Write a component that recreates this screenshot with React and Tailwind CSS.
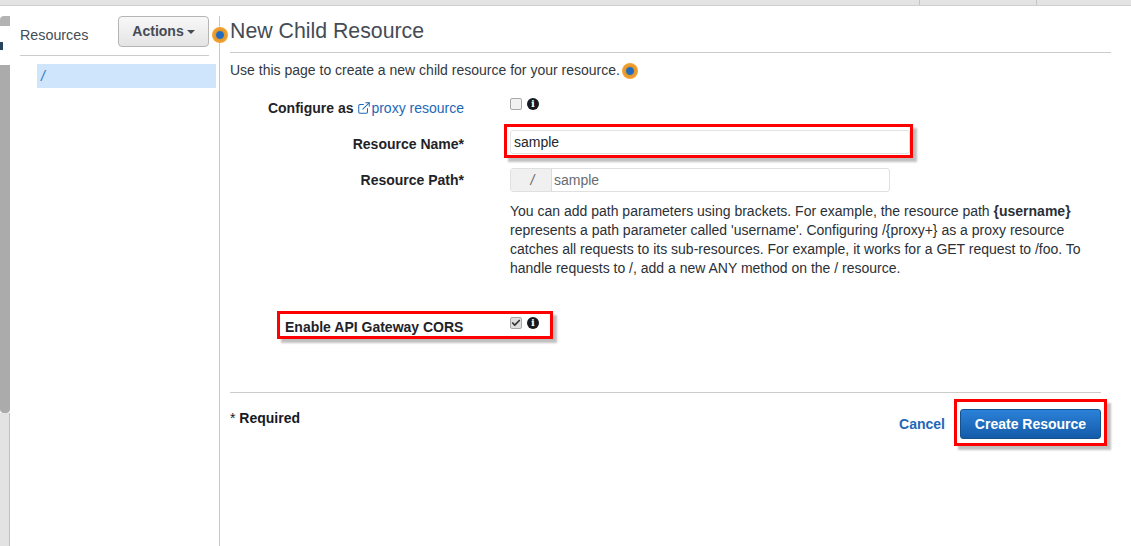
import { ExternalLink, Check } from 'lucide-react'

function HelpDot({ className = '' }) {
  return (
    <span className={`block h-[16px] w-[16px] rounded-full bg-[radial-gradient(circle,#1f6bc2_0%,#1f6bc2_30%,#e0972e_40%,#f5a331_68%,#fcc77a_100%)] ${className}`} />
  )
}

function InfoDot() {
  return (
    <span className="flex h-[12px] w-[12px] items-center justify-center rounded-full bg-[#16191f] text-[10px] font-bold leading-none text-white font-['DejaVu_Serif',serif]">
      i
    </span>
  )
}

function Row({ label, className = '', labelClass = '', children }) {
  return (
    <div className={`flex items-center ${className}`}>
      <div className={`w-[234px] text-right text-[14px] font-bold text-[#1f2328] ${labelClass}`}>{label}</div>
      <div className="ml-[46px] flex-1">{children}</div>
    </div>
  )
}

export default function App() {
  return (
    <div className="flex h-[546px] w-[1131px] flex-col overflow-hidden bg-white font-['Liberation_Sans',sans-serif] text-[14px] text-[#16191f]">
      {/* top strip */}
      <div className="flex h-[6px] shrink-0 justify-end border-b border-[#d0d0d0] bg-[#e3e3e3]">
        <div className="w-[117px] border-l border-[#c4c4c4]" />
        <div className="w-[95px] border-l border-[#c4c4c4]" />
      </div>

      <div className="flex flex-1 pt-[10px]">
        {/* collapsed nav rail */}
        <div className="flex w-[10px] shrink-0 flex-col">
          <div className="h-[10px] w-[10px] rounded-tl-[4px] bg-[#b3b3b3]" />
          <div className="mt-[16px] h-[8px] w-[3px] bg-[#27455f]" />
          <div className="mt-[15px] h-[348px] w-[10px] rounded-b-[4px] bg-[#ababab]" />
          <div className="flex-1 border-r border-[#c0c0c0] bg-[#e3e3e3]" />
        </div>

        {/* resources tree */}
        <div className="w-[210px] shrink-0 border-r border-[#c8c8c8] pl-[10px]">
          <div className="flex h-[40px] w-[189px] items-start justify-between border-b border-[#cccccc]">
            <span className="mt-[9px] text-[14.3px] text-[#444c55]">Resources</span>
            <button className="flex h-[31px] w-[91px] items-center justify-center rounded-[4px] border border-[#b5b5b5] bg-gradient-to-b from-[#f8f8f8] to-[#e4e4e4] text-[14px] font-bold text-[#444b55]">
              Actions
              <span className="ml-[3px] mt-[1px] h-0 w-0 border-x-[4px] border-t-[4px] border-x-transparent border-t-[#444b55]" />
            </button>
          </div>
          <div className="ml-[17px] mt-[8px] flex h-[24px] w-[179px] items-center bg-[#cee5fc] pl-[4px] italic text-[#2f74c0]">
            /
          </div>
        </div>

        {/* main panel */}
        <div className="relative w-[891px] shrink-0 pl-[10px]">
          <HelpDot className="absolute left-[-8px] top-[11px]" />
          <h1 className="flex h-[37px] items-start border-b border-[#cccccc] text-[21.3px] leading-[30px] text-[#444c55]">
            New Child Resource
          </h1>
          <div className="mt-[7px] flex items-center gap-[2px] text-[#33383e]">
            Use this page to create a new child resource for your resource.
            <HelpDot />
          </div>

          <div className="mt-[13px] w-[880px]">
            <Row
              className="h-[28px]"
              label={
                <span>
                  Configure as{' '}
                  <span className="font-normal text-[#1d68b8]">
                    <ExternalLink className="mb-[2px] inline h-[14px] w-[14px]" strokeWidth={1.75} />
                    proxy resource
                  </span>
                </span>
              }
            >
              <div className="mb-[8px] flex items-center gap-[5px]">
                <span className="h-[12px] w-[12px] rounded-[2px] border border-[#a8a8a8] bg-[#f1f1f1]" />
                <InfoDot />
              </div>
            </Row>

            <Row className="mt-[2px] h-[34px]" labelClass="pt-[6px]" label="Resource Name*">
              <div className="ml-[-6px] h-[34px] w-[409px] border-[3px] border-[#ff0000] pl-[3px] pt-[3px] pb-[1px] shadow-[4px_4px_2px_rgba(0,0,0,0.25)]">
                <div className="flex h-full items-center rounded-[3px] border border-[#e3e3e3] pl-[3px] pt-[1px] text-[#23272c]">
                  sample
                </div>
              </div>
            </Row>

            <Row className="mt-[10px] h-[24px]" label="Resource Path*">
              <div className="flex h-[24px] w-[380px] rounded-[3px] border border-[#e0e0e0]">
                <div className="flex w-[41px] items-center justify-center rounded-l-[3px] border-r border-[#dcdcdc] bg-[#f0f0f0] pl-[3px] italic text-[#666666]">
                  /
                </div>
                <div className="flex items-center pl-[2px] text-[#666c72]">sample</div>
              </div>
            </Row>

            <p className="ml-[280px] mt-[10px] w-[590px] leading-[19px] text-[#2b3036]">
              You can add path parameters using brackets. For example, the resource path <b>{'{username}'}</b> represents a path parameter called 'username'. Configuring /{'{proxy+}'} as a proxy resource catches all requests to its sub-resources. For example, it works for a GET request to /foo. To handle requests to /, add a new ANY method on the / resource.
            </p>

            {/* cors toggle, flagged in red */}
            <div className="ml-[47px] mt-[33px] flex h-[28px] w-[276px] items-center border-[3px] border-[#ff0000] pl-[5px] shadow-[4px_4px_2px_rgba(0,0,0,0.25)]">
              <span className="w-[225px] pt-[5px] font-bold text-[#1f2328]">Enable API Gateway CORS</span>
              <div className="mb-[4px] flex items-center gap-[5px]">
                <span className="flex h-[12px] w-[12px] items-center justify-center rounded-[2px] border border-[#a8a8a8] bg-[#dedede]">
                  <Check className="h-[10px] w-[10px] text-[#333333]" strokeWidth={4} />
                </span>
                <InfoDot />
              </div>
            </div>
          </div>

          <div className="mt-[53px] w-[871px] border-t border-[#cccccc]" />
          <div className="flex w-[877px] items-start justify-between">
            <div className="pt-[15px] text-[14px]">
              * <b>Required</b>
            </div>
            <div className="mt-[6px] flex items-center">
              <span className="mr-[9px] mt-[3px] font-bold text-[#1d68b8]">Cancel</span>
              <div className="border-[3px] border-[#ff0000] px-[3px] pb-[4px] pt-[7px] shadow-[4px_4px_2px_rgba(0,0,0,0.25)]">
                <button className="block h-[30px] w-[141px] rounded-[3px] border border-[#15508f] bg-gradient-to-b from-[#2b82d9] to-[#135ba9] text-[14px] font-bold text-white">
                  Create Resource
                </button>
              </div>
            </div>
          </div>
        </div>
      </div>
    </div>
  )
}
